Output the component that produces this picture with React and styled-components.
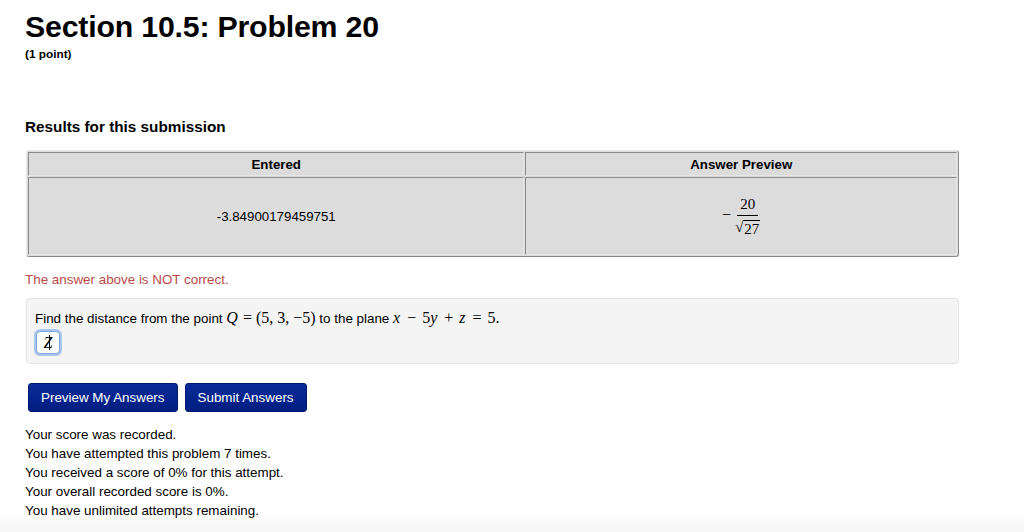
import React from "react";
import styled, { createGlobalStyle } from "styled-components";

const GlobalStyle = createGlobalStyle`
  html, body {
    margin: 0;
    padding: 0;
    background: #ffffff;
    font-family: "Liberation Sans", Arial, Helvetica, sans-serif;
    color: #000;
  }
`;

const Page = styled.div`
  padding: 10px 66px 0 25px;
  width: 1024px;
  height: 532px;
  box-sizing: border-box;
  overflow: hidden;
  background: linear-gradient(to bottom, #fff 0, #fff 510px, #f6f6f6 532px);
`;

const Title = styled.h1`
  margin: 0;
  font-size: 30.3px;
  font-weight: bold;
  line-height: 34px;
  letter-spacing: -0.2px;
`;

const Points = styled.div`
  font-size: 11.8px;
  font-weight: bold;
  margin-top: 3px;
`;

const Heading = styled.h2`
  margin: 57px 0 0;
  font-size: 15.3px;
  font-weight: bold;
  line-height: 18px;
`;

const Table = styled.table`
  margin-top: 14px;
  margin-left: 1px;
  width: 933px;
  border-collapse: separate;
  border-spacing: 1px;
  border: 1px solid;
  border-color: #e6e6e6 #8a8a8a #8a8a8a #e6e6e6;
  border-radius: 3px;
  background: #dcdcdc;
  font-size: 13.3px;
`;

const Th = styled.th`
  height: 22px;
  padding: 0;
  border: 1px solid;
  border-color: #8a8a8a #e6e6e6 #e6e6e6 #8a8a8a;
  background: #dcdcdc;
  font-weight: bold;
  width: ${(p) => p.$w};
`;

const Td = styled.td`
  height: 76px;
  padding: 0;
  border: 1px solid;
  border-color: #8a8a8a #e6e6e6 #e6e6e6 #8a8a8a;
  background: #dcdcdc;
  text-align: center;
  vertical-align: middle;
`;

const Math = styled.span`
  font-family: "Liberation Serif", "DejaVu Serif", serif;
  font-size: 16px;
`;

const Var = styled.i`
  font-family: "Liberation Serif", "DejaVu Serif", serif;
  margin-right: 1px;
`;

const Op = styled.span`
  margin: 0 ${(p) => p.$gap || 4}px;
`;

const Frac = styled.span`
  display: inline-flex;
  flex-direction: column;
  align-items: center;
  vertical-align: middle;
  margin-left: 4px;
  font-size: 15px;
`;

const Numer = styled.span`
  padding: 0 3px 3px;
  border-bottom: 1px solid #000;
  line-height: 16px;
`;

const Denom = styled.span`
  padding-top: 3px;
  display: inline-flex;
  align-items: flex-start;
  line-height: 16px;
`;

const Radical = styled.span`
  border-top: 1px solid #000;
  padding: 0 1px;
  margin-top: 1px;
`;

const Wrong = styled.div`
  margin-top: 15px;
  color: #b94a48;
  font-size: 13.4px;
`;

const ProblemBox = styled.div`
  margin-top: 11px;
  margin-left: 1px;
  width: 933px;
  box-sizing: border-box;
  padding: 10px 8px 8px 8px;
  background: #f4f4f4;
  border: 1px solid #e3e3e3;
  border-radius: 4px;
  font-size: 13.4px;
  line-height: 18px;
  height: 66px;
`;

const AnswerInput = styled.div`
  position: relative;
  margin-top: 3px;
  width: 22px;
  height: 21px;
  border: 1px solid #7da4d8;
  border-radius: 4px;
  box-shadow: 0 0 0 2px #a8c6ec;
  background: #fff;
  font-family: "Liberation Serif", serif;
  font-size: 16px;
  line-height: 21px;
  text-align: center;
  font-style: italic;
  margin-left: 1px;

  &::after {
    content: "";
    position: absolute;
    left: 12px;
    top: 3px;
    width: 1px;
    height: 15px;
    background: #000;
  }
`;

const Buttons = styled.div`
  display: flex;
  gap: 7px;
  margin-top: 19px;
  margin-left: 3px;
`;

const Button = styled.button`
  height: 29px;
  padding: 0 12px;
  border: 1px solid #001a6e;
  border-radius: 3px;
  background: linear-gradient(to bottom, #0a2a99, #001e80);
  color: #fff;
  font-family: "Liberation Sans", Arial, sans-serif;
  font-size: 13.4px;
`;

const Messages = styled.div`
  margin-top: 13px;
  font-size: 13.4px;
  line-height: 19px;
`;

export default function App() {
  return (
    <>
      <GlobalStyle />
      <Page>
        <Title>Section 10.5: Problem 20</Title>
        <Points>(1 point)</Points>
        <Heading>Results for this submission</Heading>
        <Table>
          <thead>
            <tr>
              <Th $w="53.5%">Entered</Th>
              <Th $w="46.5%">Answer Preview</Th>
            </tr>
          </thead>
          <tbody>
            <tr>
              <Td>-3.84900179459751</Td>
              <Td>
                <Math>
                  −
                  <Frac>
                    <Numer>20</Numer>
                    <Denom>
                      √<Radical>27</Radical>
                    </Denom>
                  </Frac>
                </Math>
              </Td>
            </tr>
          </tbody>
        </Table>
        <Wrong>The answer above is NOT correct.</Wrong>
        <ProblemBox>
          Find the distance from the point{" "}
          <Math>
            <Var>Q</Var>
            <Op>=</Op>(5, 3, −5)
          </Math>{" "}
          to the plane{" "}
          <Math>
            <Var>x</Var>
            <Op $gap={6}>−</Op>5<Var>y</Var>
            <Op $gap={6}>+</Op>
            <Var>z</Var>
            <Op $gap={6}>=</Op>5.
          </Math>
          <AnswerInput>Z</AnswerInput>
        </ProblemBox>
        <Buttons>
          <Button>Preview My Answers</Button>
          <Button>Submit Answers</Button>
        </Buttons>
        <Messages>
          <div>Your score was recorded.</div>
          <div>You have attempted this problem 7 times.</div>
          <div>You received a score of 0% for this attempt.</div>
          <div>Your overall recorded score is 0%.</div>
          <div>You have unlimited attempts remaining.</div>
        </Messages>
      </Page>
    </>
  );
}
